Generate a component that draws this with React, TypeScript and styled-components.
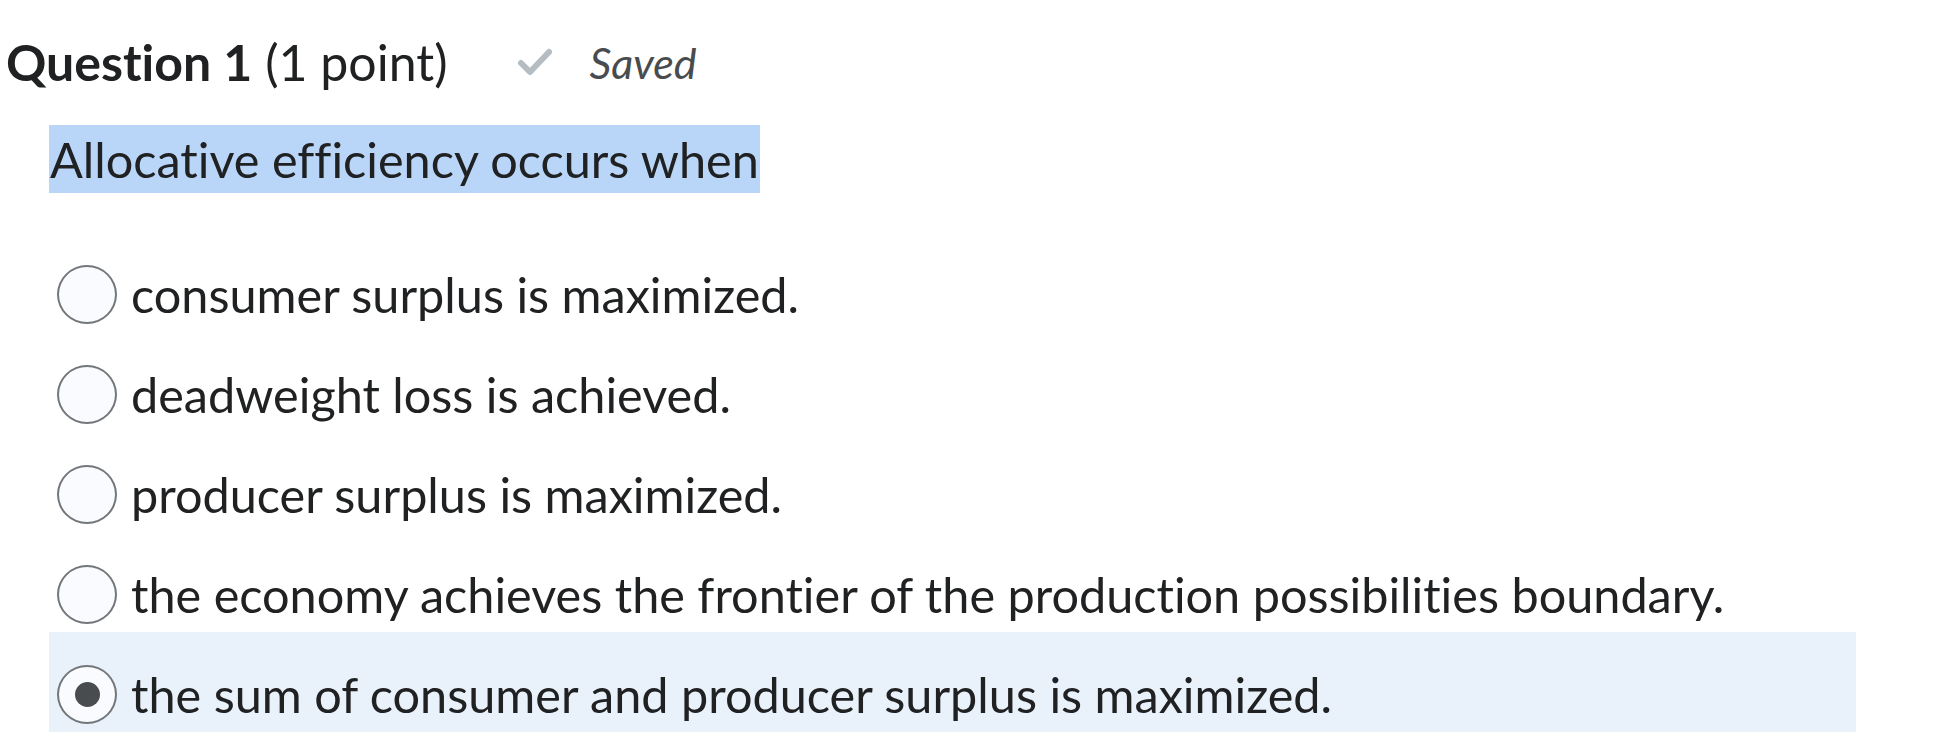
import React from 'react';
import styled, { createGlobalStyle } from 'styled-components';

const GlobalStyle = createGlobalStyle`
  html, body {
    margin: 0;
    padding: 0;
    background: #ffffff;
  }
  body {
    font-family: Lato, "Open Sans", "Liberation Sans", sans-serif;
    font-variant-ligatures: none;
    font-feature-settings: "liga" 0, "clig" 0;
    color: #202122;
  }
`;

interface Choice {
  id: string;
  label: string;
}

const choices: Choice[] = [
  { id: 'a', label: 'consumer surplus is maximized.' },
  { id: 'b', label: 'deadweight loss is achieved.' },
  { id: 'c', label: 'producer surplus is maximized.' },
  { id: 'd', label: 'the economy achieves the frontier of the production possibilities boundary.' },
  { id: 'e', label: 'the sum of consumer and producer surplus is maximized.' },
];

const App = () => {
  const selected = 'e';

  return (
    <Page>
      <GlobalStyle />
      <Header>
        <Title>
          <strong>Question 1</strong> (1 point)
        </Title>
        <SaveState>
          <CheckIcon viewBox="0 0 36 28" aria-hidden="true">
            <path d="M4 15 L13 24 L32 4" />
          </CheckIcon>
          <SavedText>Saved</SavedText>
        </SaveState>
      </Header>

      <Prompt>
        <Selection>Allocative efficiency occurs when</Selection>
      </Prompt>

      <ChoiceList>
        {choices.map((c) => (
          <ChoiceRow key={c.id} $active={c.id === selected}>
            <Radio $checked={c.id === selected} />
            <ChoiceLabel>{c.label}</ChoiceLabel>
          </ChoiceRow>
        ))}
      </ChoiceList>
    </Page>
  );
};

const Page = styled.div`
  padding: 28px 0 0 6px;
`;

const Header = styled.div`
  display: flex;
  align-items: center;
  height: 68px;
`;

const Title = styled.h2`
  margin: 0;
  font-size: 50px;
  font-weight: 400;
  line-height: 68px;
  color: #202122;
  strong {
    font-weight: 700;
  }
`;

const SaveState = styled.div`
  display: flex;
  align-items: center;
  margin-left: 70px;
  gap: 36px;
`;

const CheckIcon = styled.svg`
  width: 36px;
  height: 28px;
  fill: none;
  stroke: #b5bdc2;
  stroke-width: 6;
  stroke-linecap: round;
  stroke-linejoin: round;
`;

const SavedText = styled.span`
  font-size: 43px;
  font-style: italic;
  color: #494c4e;
`;

const Prompt = styled.div`
  margin: 29px 0 0 43px;
`;

const Selection = styled.span`
  display: inline-block;
  background: #b9d6f9;
  font-size: 48.6px;
  line-height: 68px;
  padding: 0 1px;
`;

const ChoiceList = styled.div`
  margin: 39px 0 0 43px;
  width: 1807px;
  display: flex;
  flex-direction: column;
`;

const ChoiceRow = styled.label<{ $active?: boolean }>`
  box-sizing: border-box;
  display: flex;
  align-items: center;
  height: 100px;
  padding: 24px 8px 0;
  gap: 14px;
  background: ${(p) => (p.$active ? '#e9f1fb' : 'transparent')};
`;

const Radio = styled.span<{ $checked?: boolean }>`
  box-sizing: border-box;
  flex: none;
  position: relative;
  width: 60px;
  height: 59px;
  border-radius: 50%;
  border: 2px solid #737779;
  background: #f9fbff;
  &::after {
    content: '';
    display: ${(p) => (p.$checked ? 'block' : 'none')};
    position: absolute;
    left: 50%;
    top: 50%;
    width: 25px;
    height: 25px;
    margin: -12.5px 0 0 -12.5px;
    border-radius: 50%;
    background: #494c4e;
  }
`;

const ChoiceLabel = styled.span`
  font-size: 48.6px;
  line-height: 74px;
  color: #202122;
`;

export default App;
